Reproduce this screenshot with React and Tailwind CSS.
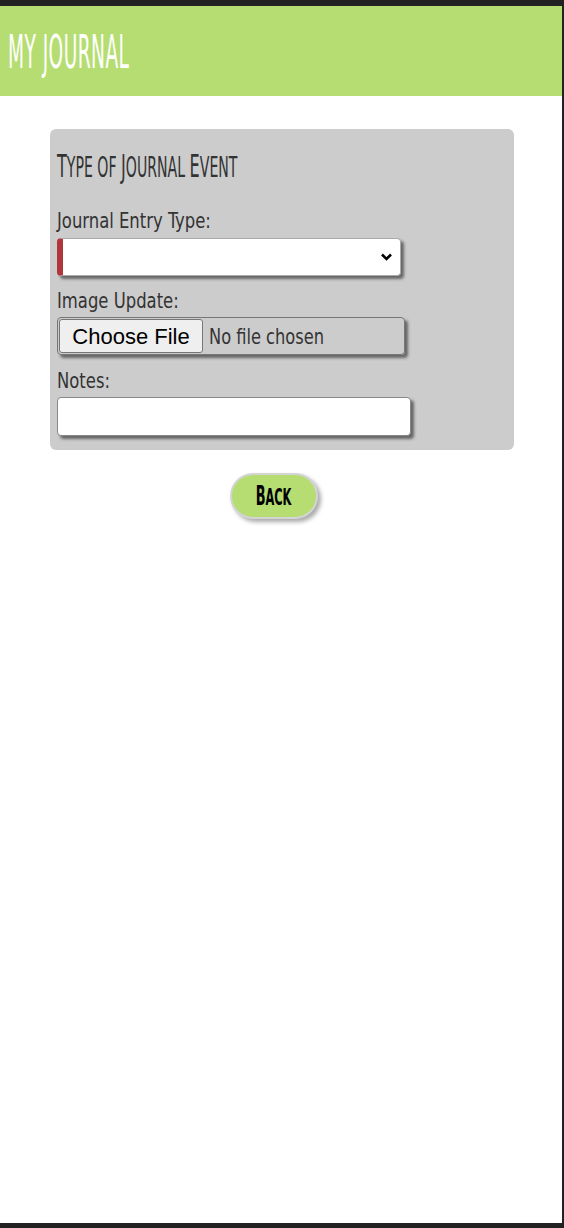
import { useState } from "react";

const narrow = "font-['Liberation_Sans_Narrow','DejaVu_Sans_Condensed',sans-serif]";

function Label({ children, htmlFor }) {
  return (
    <label
      htmlFor={htmlFor}
      className={`block ${narrow} text-[22px] leading-[24px] text-[#333] origin-left scale-x-[0.83] whitespace-nowrap`}
    >
      {children}
    </label>
  );
}

export default function App() {
  const [entryType, setEntryType] = useState("");
  const [notes, setNotes] = useState("");

  return (
    <div className="h-[1228px] bg-white border-t-[6px] border-r-2 border-b-[5px] border-[#222] flex flex-col overflow-hidden">
      {/* Header */}
      <header className="h-[90px] shrink-0 bg-[#b5dd72] flex items-center pl-2">
        <h1
          className={`${narrow} text-[47px] leading-none text-white origin-left scale-x-[0.44] whitespace-nowrap tracking-[1px]`}
        >
          MY JOURNAL
        </h1>
      </header>

      <main className="pt-[33px] flex flex-col">
        {/* Form card */}
        <form className="ml-[50px] w-[464px] bg-[#cccccc] rounded-md pl-[7px] pt-[18px] pb-[14px]">
          <h2
            className={`${narrow} h-[38px] leading-[38px] text-[#333] uppercase origin-left scale-x-[0.56] whitespace-nowrap`}
          >
            <span className="text-[32px]">T</span>
            <span className="text-[28px]">ype of </span>
            <span className="text-[32px]">J</span>
            <span className="text-[28px]">ournal </span>
            <span className="text-[32px]">E</span>
            <span className="text-[28px]">vent</span>
          </h2>

          <div className="mt-[24px]">
            <Label htmlFor="entry-type">Journal Entry Type:</Label>
            <div className="relative mt-[5px] w-[344px] h-[38px]">
              <select
                id="entry-type"
                value={entryType}
                onChange={(e) => setEntryType(e.target.value)}
                className="appearance-none w-full h-full bg-white rounded-[4px] border border-[#aaa] border-l-[6px] border-l-[#b0363c] shadow-[3px_3px_3px_#666] font-['Liberation_Sans',sans-serif] text-[18px] pl-2"
              >
                <option value=""></option>
                <option value="watering">Watering</option>
                <option value="feeding">Feeding</option>
              </select>
              <svg
                className="absolute right-[9px] top-[15px] w-[11px] h-[8px] pointer-events-none"
                viewBox="0 0 11 8"
              >
                <path d="M1 1.5 L5.5 6 L10 1.5" fill="none" stroke="#000" strokeWidth="2.6" />
              </svg>
            </div>
          </div>

          <div className="mt-[13px]">
            <Label htmlFor="image">Image Update:</Label>
            <div className="mt-[4px] w-[348px] h-[38px] border border-[#777] rounded-[4px] shadow-[3px_3px_3px_#666] flex items-center pl-[1px] gap-[6px]">
              <span className="h-[34px] w-[144px] bg-[#efefef] border border-[#767676] rounded-[3px] flex items-center justify-center font-['Liberation_Sans',sans-serif] text-[22px] text-black">
                Choose File
              </span>
              <span className={`${narrow} text-[22px] text-[#333] origin-left scale-x-[0.82] whitespace-nowrap`}>
                No file chosen
              </span>
            </div>
          </div>

          <div className="mt-[14px]">
            <Label htmlFor="notes">Notes:</Label>
            <input
              id="notes"
              type="text"
              value={notes}
              onChange={(e) => setNotes(e.target.value)}
              className="mt-[4px] block w-[354px] h-[39px] bg-white border border-[#888] rounded-[4px] shadow-[3px_3px_3px_#666]"
            />
          </div>
        </form>

        {/* Back button */}
        <div className="w-[548px] flex justify-center mt-[23px]">
          <button className="w-[88px] h-[46px] rounded-full bg-[#b5dd72] border-2 border-[#d4d4d4] shadow-[3px_3px_4px_#aaa] flex items-center justify-center">
            <span
              className={`${narrow} text-black uppercase scale-x-[0.55] font-bold whitespace-nowrap`}
            >
              <span className="text-[26px]">B</span>
              <span className="text-[23px]">ack</span>
            </span>
          </button>
        </div>
      </main>
    </div>
  );
}
